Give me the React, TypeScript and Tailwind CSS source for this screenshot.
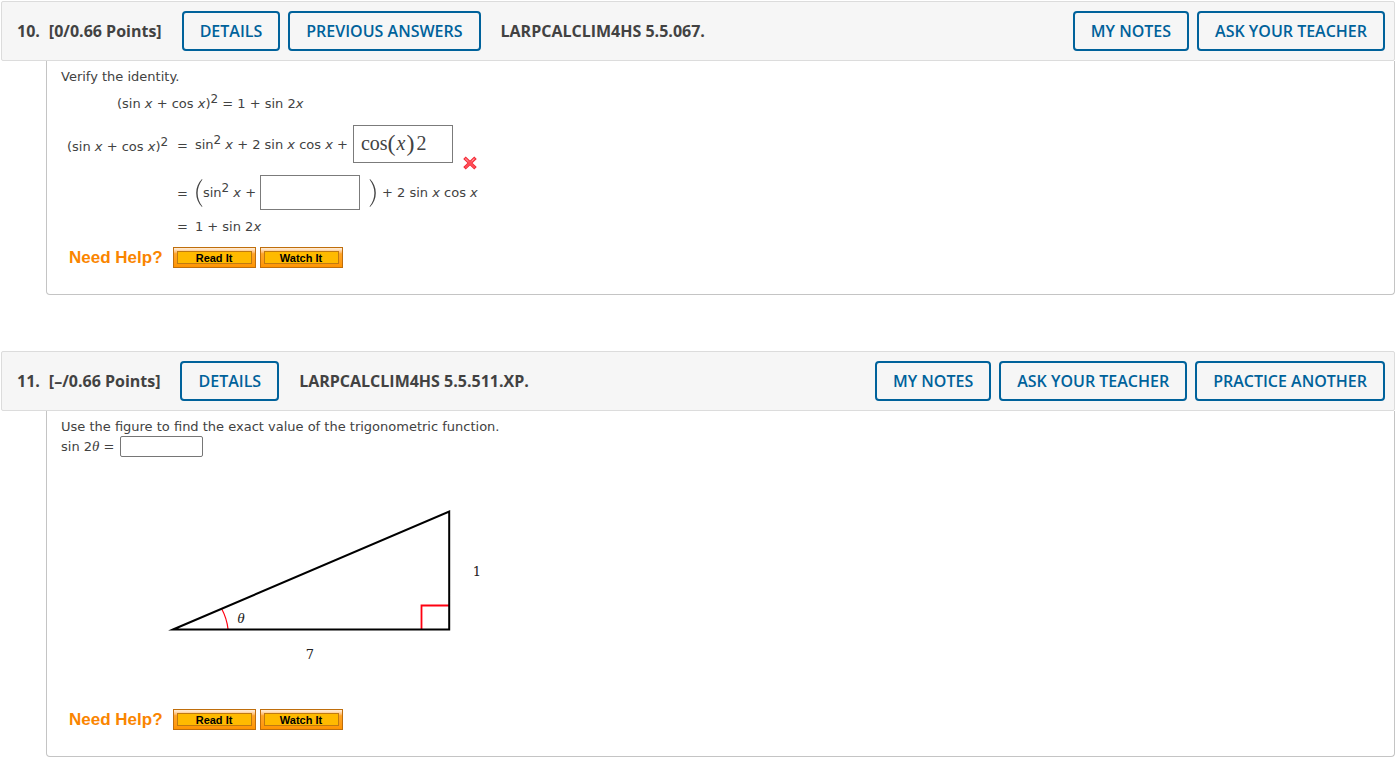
import { useState } from 'react';
import type { ReactNode } from 'react';

const bodyFont = "font-['DejaVu_Sans',Verdana,sans-serif]";
const headerFont = "font-['Open_Sans',sans-serif]";
const helpFont = "font-['Liberation_Sans',Arial,sans-serif]";
const mathFont = "font-['Liberation_Serif','Times_New_Roman',serif]";

function HeaderButton({ children }: { children: ReactNode }) {
  return (
    <button
      type="button"
      className="h-10 px-4 rounded border-2 border-[#00629b] text-base font-semibold text-[#00629b] whitespace-nowrap hover:bg-[#e6f2f8]"
    >
      {children}
    </button>
  );
}

function HelpButton({ children }: { children: ReactNode }) {
  return (
    <button
      type="button"
      className="flex w-[83px] h-[21px] p-[3px] border border-[#bf6e0c] bg-linear-to-b from-[#ffe9cf] from-5% via-[#ffa526] via-30% to-[#ff9500]"
    >
      <span className="flex flex-1 h-full items-center justify-center pt-px border border-[#c07a10] bg-[#ffba00] text-[11px] leading-3 font-bold text-black">
        {children}
      </span>
    </button>
  );
}

function NeedHelp() {
  return (
    <div className={`${helpFont} flex items-center gap-1 pl-2`}>
      <span className="mr-[6px] text-[17px] leading-5 font-bold text-[#fa8500]">Need Help?</span>
      <HelpButton>Read It</HelpButton>
      <HelpButton>Watch It</HelpButton>
    </div>
  );
}

type QuestionProps = {
  number: number;
  points: string;
  code: string;
  leftActions: string[];
  rightActions: string[];
  children: ReactNode;
};

function Question({ number, points, code, leftActions, rightActions, children }: QuestionProps) {
  return (
    <section>
      <header
        className={`${headerFont} flex items-center justify-between h-[60px] pl-[15px] pr-[9px] border border-[#dcdcdc] rounded-xs bg-[#f6f6f6] text-base font-bold text-[#424242]`}
      >
        <div className="flex items-center gap-2">
          <span className="mr-px">{number}.</span>
          <span className="mr-3">{points}</span>
          {leftActions.map((label) => (
            <HeaderButton key={label}>{label}</HeaderButton>
          ))}
          <h2 className="ml-3">{code}</h2>
        </div>
        <div className="flex items-center gap-2">
          {rightActions.map((label) => (
            <HeaderButton key={label}>{label}</HeaderButton>
          ))}
        </div>
      </header>
      <div
        className={`${bodyFont} ml-[45px] px-[14px] border border-t-0 border-[#c4c4c4] rounded-b text-[13px] leading-5 text-[#424242]`}
      >
        {children}
      </div>
    </section>
  );
}

function Sq() {
  return <sup className="relative -top-[5px] text-[12px] leading-none align-baseline">2</sup>;
}

function Paren({ close = false }: { close?: boolean }) {
  return (
    <svg width="8" height="30" viewBox="0 0 8 30" role="img" aria-label={close ? ')' : '('}>
      <path
        d={
          close
            ? 'M1 1C4.800 5 6.800 9.500 6.800 15S4.800 25 1 29L.6 28.600C3.600 24.500 5.400 20 5.400 15S3.600 5.500.6 1.400Z'
            : 'M7 1C3.200 5 1.200 9.500 1.200 15S3.200 25 7 29L7.400 28.600C4.400 24.500 2.600 20 2.600 15S4.400 5.500 7.400 1.400Z'
        }
        fill="#424242"
      />
    </svg>
  );
}

function WrongMark() {
  return (
    <svg width="14" height="14" viewBox="0 0 14 14" role="img" aria-label="Incorrect">
      <path d="M2.800 3 11.200 11M11.200 3 2.800 11" stroke="#f02a36" strokeWidth="3.6" strokeLinecap="square" />
      <path d="M3 3 11 11M11 3 3 11" stroke="#ff4c56" strokeWidth="2.4" strokeLinecap="round" />
      <path d="M2.500 3 5 5.200M9 5 11 3" stroke="#ff9aa0" strokeWidth="1" strokeLinecap="round" />
    </svg>
  );
}

function IdentityQuestion() {
  const [second, setSecond] = useState('');

  return (
    <Question
      number={10}
      points="[0/0.66 Points]"
      code="LARPCALCLIM4HS 5.5.067."
      leftActions={['DETAILS', 'PREVIOUS ANSWERS']}
      rightActions={['MY NOTES', 'ASK YOUR TEACHER']}
    >
      <div className="pt-[6px] pb-[26px]">
        <p>Verify the identity.</p>
        <p className="mt-[7px] pl-14">
          (sin <i>x</i> + cos <i>x</i>)<Sq /> = 1 + sin 2<i>x</i>
        </p>

        <div className="grid grid-cols-[103px_auto_1fr] items-center gap-x-[7px] mt-[11px] pl-[6px]">
          <span className="whitespace-nowrap pt-[6px]">
            (sin <i>x</i> + cos <i>x</i>)<Sq />
          </span>
          <span className="pt-1">=</span>
          <div className="flex items-center gap-[5px]">
            <span className="pt-[2px]">
              sin<Sq /> <i>x</i> + 2 sin <i>x</i> cos <i>x</i> +
            </span>
            <label className="relative flex items-center w-[100px] h-[38px] pl-[7px] border border-[#7b7b7b]">
              <span aria-hidden="true" className={`${mathFont} flex items-center pb-[2px] text-xl`}>
                cos<span className="text-2xl">(</span>
                <i className="px-px">x</i>
                <span className="text-2xl">)</span>
                <span className="pl-[2px]">2</span>
              </span>
              <input
                aria-label="First missing term"
                className="absolute inset-0 w-full bg-transparent outline-none"
              />
            </label>
            <span className="self-end ml-[5px] -mb-[7px]">
              <WrongMark />
            </span>
          </div>

          <span className="col-start-2 mt-3 pt-[2px]">=</span>
          <div className="flex items-center mt-3">
            <Paren />
            <span>
              sin<Sq /> <i>x</i> +
            </span>
            <input
              aria-label="Second missing term"
              value={second}
              onChange={(e) => setSecond(e.target.value)}
              className={`${mathFont} w-[100px] h-[35px] ml-1 mr-[9px] px-[7px] border border-[#7b7b7b] text-xl outline-none`}
            />
            <Paren close />
            <span className="ml-[5px]">
              + 2 sin <i>x</i> cos <i>x</i>
            </span>
          </div>

          <span className="col-start-2 mt-[7px]">=</span>
          <span className="mt-[7px]">
            1 + sin 2<i>x</i>
          </span>
        </div>

        <div className="mt-[10px]">
          <NeedHelp />
        </div>
      </div>
    </Question>
  );
}

function TriangleFigure() {
  return (
    <svg width="450" height="220" viewBox="0 0 450 220" fill="none" role="img" aria-label="Right triangle">
      <path d="M388 138.500H360.500V162" stroke="#ff0010" strokeWidth="1.8" />
      <path d="M167 162A56 56 0 0 0 160.500 141.500" stroke="#ff0010" strokeWidth="1.2" />
      <path d="M112 162.500 388.200 44.500V162.500Z" stroke="#000" strokeWidth="2" strokeMiterlimit="6" />
      <text x="180" y="156" textAnchor="middle" fill="#222" className={`${mathFont} text-[15px] italic`}>
        θ
      </text>
      <text x="249" y="192" textAnchor="middle" fill="#222" className="font-['DejaVu_Serif',serif] text-[13px]">
        7
      </text>
      <text x="416" y="109" textAnchor="middle" fill="#222" className="font-['DejaVu_Serif',serif] text-[13px]">
        1
      </text>
    </svg>
  );
}

function TriangleQuestion() {
  const [value, setValue] = useState('');

  return (
    <Question
      number={11}
      points="[–/0.66 Points]"
      code="LARPCALCLIM4HS 5.5.511.XP."
      leftActions={['DETAILS']}
      rightActions={['MY NOTES', 'ASK YOUR TEACHER', 'PRACTICE ANOTHER']}
    >
      <div className="pt-[5px] pb-[26px]">
        <p className="pt-px leading-[19px]">Use the figure to find the exact value of the trigonometric function.</p>
        <label className="flex items-center gap-[6px]">
          <span>
            sin 2<i className={`${mathFont} text-[15px] leading-none`}>θ</i> =
          </span>
          <input
            value={value}
            onChange={(e) => setValue(e.target.value)}
            className="w-[83px] h-[21px] px-1 border border-[#767676] rounded-xs"
          />
        </label>
        <div className="mt-[10px] mb-[22px]">
          <TriangleFigure />
        </div>
        <NeedHelp />
      </div>
    </Question>
  );
}

export default function App() {
  return (
    <main className="flex flex-col gap-14 min-w-[1000px] pt-px pl-px bg-white">
      <IdentityQuestion />
      <TriangleQuestion />
    </main>
  );
}
